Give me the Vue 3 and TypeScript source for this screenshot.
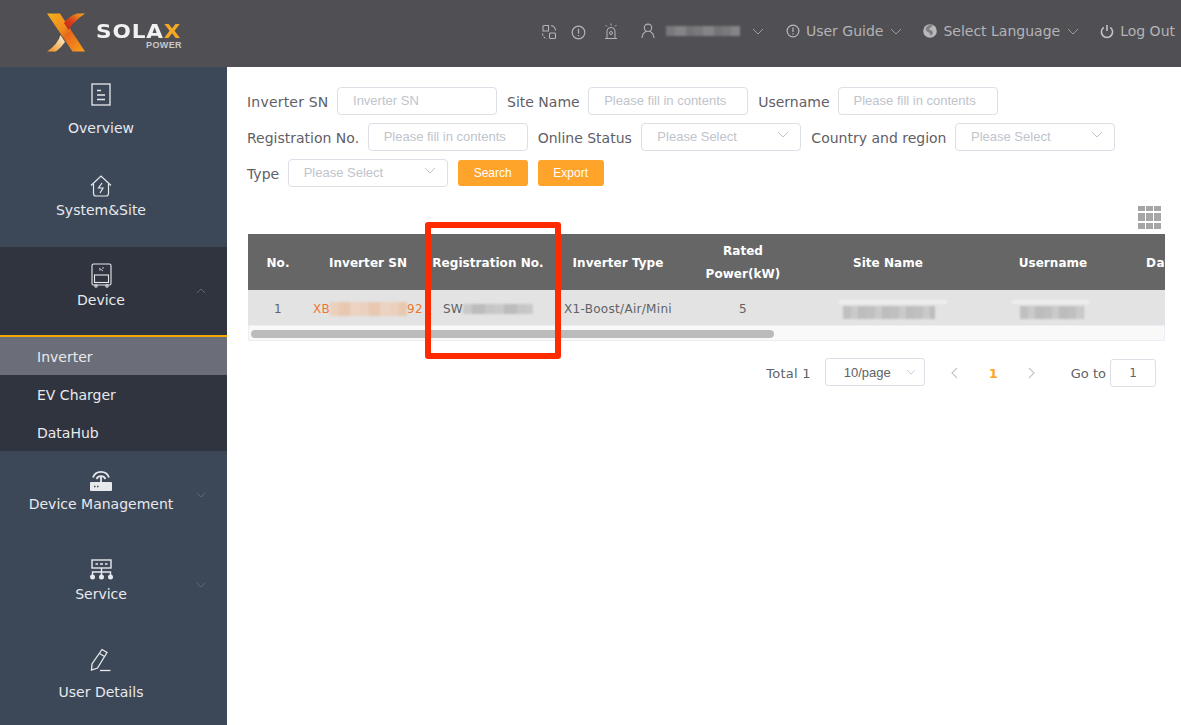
<script setup lang="ts">
const cols = [
  { w: 60, label: 'No.' },
  { w: 120, label: 'Inverter SN' },
  { w: 120, label: 'Registration No.' },
  { w: 140, label: 'Inverter Type' },
  { w: 110, label: 'Rated\nPower(kW)' },
  { w: 180, label: 'Site Name' },
  { w: 150, label: 'Username' },
  { w: 120, label: 'Date', left: true },
]
const subs = ['Inverter', 'EV Charger', 'DataHub']
</script>

<template>
  <div class="page">
    <header class="top">
      <div class="logo">
        <svg class="logo-x" viewBox="0 0 38 39" width="38" height="39">
          <defs>
            <linearGradient id="xa" x1="0" y1="0" x2="1" y2="1">
              <stop offset="0" stop-color="#f5b01c" />
              <stop offset="0.42" stop-color="#f08a1d" />
              <stop offset="0.55" stop-color="#e8681b" />
              <stop offset="1" stop-color="#f9a01b" />
            </linearGradient>
            <linearGradient id="xb" x1="1" y1="0" x2="0" y2="1">
              <stop offset="0" stop-color="#f9ae1a" />
              <stop offset="0.55" stop-color="#d8401c" />
              <stop offset="1" stop-color="#b8241c" />
            </linearGradient>
            <linearGradient id="xc" x1="1" y1="0" x2="0" y2="1">
              <stop offset="0" stop-color="#fff6e8" />
              <stop offset="0.5" stop-color="#f6c077" />
              <stop offset="1" stop-color="#ef8f19" />
            </linearGradient>
          </defs>
          <path d="M0 0.500 H13 L38 38.500 H25.500 Z" fill="url(#xa)" />
          <path d="M38 0.500 H30 Q22 3 17 10 L21.500 17 Q26 9 38 0.500 Z" fill="url(#xb)" />
          <path d="M0 38.500 H9 Q14 35 18 29 L13.500 22 Q11 31 0 38.500 Z" fill="url(#xc)" />
        </svg>
        <div class="brand">
          <div class="solax">SOLA<span>X</span></div>
          <div class="power">POWER</div>
        </div>
      </div>
      <nav class="tools">
        <span class="tool icons">
          <svg width="16" height="16" viewBox="0 0 16 16" fill="none" stroke="#b4b4b6" stroke-width="1.100">
            <path d="M2 7V2.500Q2 1.500 3 1.500H7.500V7Z" /><rect x="8.500" y="9" width="6" height="5.500" rx="1" />
            <path d="M10 1.500Q14 2 14.500 6.500" /><path d="M1.500 9.500Q2 14 6 14.500" stroke-dasharray="2 1.400" />
          </svg>
        </span>
        <span class="tool alert">
          <svg width="15" height="15" viewBox="0 0 15 15" fill="none" stroke="#b4b4b6" stroke-width="1.200">
            <circle cx="7.500" cy="7.500" r="6.300" /><path d="M7.500 3.800V8.600M7.500 10V11.200" />
          </svg>
        </span>
        <span class="tool bell">
          <svg width="16" height="17" viewBox="0 0 16 17" fill="none" stroke="#b4b4b6" stroke-width="1">
            <path d="M4 15V8Q4 4.500 8 4.500T12 8V15" /><path d="M2 15.500H14" /><circle cx="8" cy="10" r="1.500" />
            <path d="M8 .5V2.500M2.500 2L4 3.500M13.500 2L12 3.500" />
          </svg>
        </span>
        <span class="tool user">
          <svg width="14" height="16" viewBox="0 0 14 16" fill="none" stroke="#b4b4b6" stroke-width="1.100">
            <circle cx="7" cy="4.800" r="3.700" /><path d="M1 15Q1.500 10 5 8.600M13 15Q12.500 10 9 8.600" />
          </svg>
          <i class="blur-name"></i>
          <svg class="chev" width="12" height="7" viewBox="0 0 12 7" fill="none" stroke="#9d9da0" stroke-width="1"><path d="M1 1L6 6L11 1" /></svg>
        </span>
        <span class="tool guide">
          <svg width="14" height="14" viewBox="0 0 15 15" fill="none" stroke="#b9b9bb" stroke-width="1.300">
            <circle cx="7.500" cy="7.500" r="6.300" /><path d="M7.500 3.800V8.600M7.500 10V11.200" />
          </svg>
          User Guide
          <svg class="chev" width="12" height="7" viewBox="0 0 12 7" fill="none" stroke="#9d9da0" stroke-width="1"><path d="M1 1L6 6L11 1" /></svg>
        </span>
        <span class="tool lang">
          <svg width="14" height="14" viewBox="0 0 14 14">
            <circle cx="7" cy="7" r="6.800" fill="#b9b9bb" />
            <path d="M7 .8L9.500 1L8.500 3L6 4.500L7 6L9 6.500L10 9L8 12L6.500 9L4 7.500L2.500 5L4 2.500Z" fill="#504f54" opacity=".55" />
          </svg>
          Select Language
          <svg class="chev" width="12" height="7" viewBox="0 0 12 7" fill="none" stroke="#9d9da0" stroke-width="1"><path d="M1 1L6 6L11 1" /></svg>
        </span>
        <span class="tool logout">
          <svg width="14" height="15" viewBox="0 0 14 15" fill="none" stroke="#c2c2c4" stroke-width="1.600">
            <path d="M7 1V7" /><path d="M3.800 3.300A5.600 5.600 0 1 0 10.200 3.300" />
          </svg>
          Log Out
        </span>
      </nav>
    </header>

    <div class="body">
      <aside class="side">
        <div class="item wide">
          <svg width="20" height="24" viewBox="0 0 20 24" fill="none" stroke="#e8e9ec" stroke-width="1.300">
            <rect x="1" y="1" width="18" height="21" /><path d="M6 7.500H10M6 12H14M6 16.500H14" />
          </svg>
          <span>Overview</span>
        </div>
        <div class="item">
          <svg width="22" height="22" viewBox="0 0 22 22" fill="none" stroke="#e8e9ec" stroke-width="1.200">
            <path d="M1 10.500L11 1L21 10.500" /><path d="M3.500 9V18.500Q3.500 21 6 21H16Q18.500 21 18.500 18.500V9" />
            <path d="M12 8L8.500 13H13L10 18" />
          </svg>
          <span>System&amp;Site</span>
        </div>
        <div class="group">
          <div class="item dev">
            <svg width="21" height="25" viewBox="0 0 21 25" fill="none" stroke="#e8e9ec" stroke-width="1.100">
              <rect x="1" y="1" width="19" height="21" rx="1.500" />
              <rect x="3.500" y="12" width="14" height="7.500" />
              <path d="M8 5L12 8M8 7H9.500M11 5H13" stroke-width=".8" />
              <circle cx="5" cy="23" r="1.200" /><circle cx="16" cy="23" r="1.200" />
            </svg>
            <span>Device</span>
            <svg class="arrow" width="10" height="6" viewBox="0 0 12 7" fill="none" stroke="#6d7078" stroke-width="1"><path d="M1 6L6 1L11 6" /></svg>
          </div>
          <div class="subs">
            <div v-for="(s, i) in subs" :key="s" class="sub" :class="{ on: i === 0 }">{{ s }}</div>
          </div>
        </div>
        <div class="item">
          <svg width="22" height="22" viewBox="0 0 22 22" fill="none" stroke="#e8e9ec" stroke-width="1.800">
            <path d="M3 8.500A8.500 8.500 0 0 1 19 8.500M6.500 10A5 5 0 0 1 15.500 10" />
            <path d="M11 8V14" />
            <rect x="0" y="13" width="22" height="9" rx="1" fill="#e8e9ec" stroke="none" />
            <path d="M4 17.500H5.500M7 17.500H8.500" stroke="#3c4858" stroke-width="1.500" />
          </svg>
          <span>Device Management</span>
          <svg class="arrow" width="10" height="6" viewBox="0 0 12 7" fill="none" stroke="#687080" stroke-width="1"><path d="M1 1L6 6L11 1" /></svg>
        </div>
        <div class="item svc">
          <svg width="23" height="21" viewBox="0 0 23 21" fill="none" stroke="#e8e9ec" stroke-width="1.400">
            <rect x="2" y="1" width="19" height="8" />
            <path d="M5.500 5H8M10 5H13M15 5H17.500" />
            <path d="M11.500 9V17M2.500 17V13H20.500V17" />
            <circle cx="2.500" cy="18" r="1.800" fill="#e8e9ec" /><circle cx="11.500" cy="18" r="1.800" fill="#e8e9ec" /><circle cx="20.500" cy="18" r="1.800" fill="#e8e9ec" />
          </svg>
          <span>Service</span>
          <svg class="arrow" width="10" height="6" viewBox="0 0 12 7" fill="none" stroke="#687080" stroke-width="1"><path d="M1 1L6 6L11 1" /></svg>
        </div>
        <div class="item wide last">
          <svg width="22" height="24" viewBox="0 0 22 24" fill="none" stroke="#e8e9ec" stroke-width="1.300">
            <path d="M12 1.500L17 4.500L7.500 20L1.500 22L2 16Z" /><path d="M9.500 5.500L14.500 8.500" />
            <path d="M10 22.500H20.500" />
          </svg>
          <span>User Details</span>
        </div>
      </aside>

      <main class="main">
        <div class="form">
          <div class="row">
            <label class="first">Inverter SN</label><div class="field">Inverter SN</div>
            <label>Site Name</label><div class="field">Please fill in contents</div>
            <label class="tight">Username</label><div class="field">Please fill in contents</div>
          </div>
          <div class="row">
            <label>Registration No.</label><div class="field">Please fill in contents</div>
            <label class="loose">Online Status</label>
            <div class="field select">Please Select<svg width="12" height="7" viewBox="0 0 12 7" fill="none" stroke="#c0c4cc" stroke-width="1"><path d="M1 1L6 6L11 1" /></svg></div>
            <label>Country and region</label>
            <div class="field select">Please Select<svg width="12" height="7" viewBox="0 0 12 7" fill="none" stroke="#c0c4cc" stroke-width="1"><path d="M1 1L6 6L11 1" /></svg></div>
          </div>
          <div class="row">
            <label>Type</label>
            <div class="field select">Please Select<svg width="12" height="7" viewBox="0 0 12 7" fill="none" stroke="#c0c4cc" stroke-width="1"><path d="M1 1L6 6L11 1" /></svg></div>
            <button class="btn">Search</button>
            <button class="btn export">Export</button>
          </div>
        </div>

        <div class="grid-tool">
          <svg width="23" height="23" viewBox="0 0 23 23" fill="#a6a6a6">
            <rect x="0" y="0" width="7" height="5" /><rect x="8" y="0" width="7" height="5" /><rect x="16" y="0" width="7" height="5" />
            <rect x="0" y="7" width="7" height="8" /><rect x="8" y="7" width="7" height="8" /><rect x="16" y="7" width="7" height="8" />
            <rect x="0" y="17" width="7" height="6" /><rect x="8" y="17" width="7" height="6" /><rect x="16" y="17" width="7" height="6" />
          </svg>
        </div>

        <div class="table">
          <div class="thead">
            <div v-for="c in cols" :key="c.label" class="th" :class="{ left: c.left }" :style="{ width: c.w + 'px' }">{{ c.label }}</div>
          </div>
          <div class="tbody">
            <div class="td" style="width: 60px">1</div>
            <div class="td link" style="width: 120px">XB<i class="smear orange"></i>92</div>
            <div class="td" style="width: 120px">SW<i class="smear gray"></i></div>
            <div class="td" style="width: 140px">X1-Boost/Air/Mini</div>
            <div class="td" style="width: 110px">5</div>
            <div class="td" style="width: 180px"><i class="smear block site"></i></div>
            <div class="td" style="width: 150px"><i class="smear block usr"></i></div>
            <div class="td" style="width: 120px"></div>
          </div>
          <div class="bar"><div class="thumb"></div></div>
        </div>

        <div class="pager">
          <span class="total">Total 1</span>
          <div class="size">10/page<svg width="10" height="6" viewBox="0 0 12 7" fill="none" stroke="#c0c4cc" stroke-width="1"><path d="M1 1L6 6L11 1" /></svg></div>
          <svg class="pg-arrow first" width="7" height="12" viewBox="0 0 7 12" fill="none" stroke="#c0c4cc" stroke-width="1.100"><path d="M6 1L1 6L6 11" /></svg>
          <span class="cur">1</span>
          <svg class="pg-arrow" width="7" height="12" viewBox="0 0 7 12" fill="none" stroke="#c0c4cc" stroke-width="1.100"><path d="M1 1L6 6L1 11" /></svg>
          <span class="goto">Go to</span>
          <div class="jump">1</div>
        </div>

        <div class="redbox" aria-hidden="true"></div>
      </main>
    </div>
  </div>
</template>

<style>
html, body { margin: 0; background: #fff; }
</style>

<style scoped>
.page {
  width: 1181px;
  height: 725px;
  overflow: hidden;
  display: flex;
  flex-direction: column;
  font-family: "DejaVu Sans", sans-serif;
}
.top {
  height: 67px;
  flex: none;
  background: #504f54;
  display: flex;
  align-items: center;
  justify-content: space-between;
}
.logo { display: flex; align-items: center; margin-left: 47px; gap: 11px; }
.logo-x { display: block; margin-top: -2px; }
.brand { display: flex; flex-direction: column; align-items: flex-end; width: 86px; margin-top: 5px; }
.solax {
  width: 86px;
  font: 700 20px/18px "DejaVu Sans", sans-serif;
  letter-spacing: .8px;
  color: #f1f1f1;
  white-space: nowrap;
  transform: scaleX(1.08);
  transform-origin: left center;
}
.solax span { color: #f7a823; }
.power {
  font: 700 9px/10px "Liberation Sans", sans-serif;
  color: #c9c9ca;
  letter-spacing: .4px;
}
.tools {
  display: flex;
  align-items: center;
  color: #b4b4b6;
  font-size: 14px;
  height: 62px;
  padding-right: 6px;
  margin-top: -5px;
}
.tool { display: flex; align-items: center; white-space: nowrap; }
.icons { margin-right: 14px; margin-top: 2px; }
.alert { margin-right: 17px; margin-top: 3px; }
.bell { margin-right: 22px; margin-top: 1px; }
.user { margin-right: 22px; }
.blur-name {
  display: block;
  width: 74px;
  height: 10px;
  margin: 0 12px 0 11px;
  background: repeating-linear-gradient(90deg, #7a7a7d 0 9px, #858588 9px 20px, #747477 20px 28px);
  filter: blur(1px);
}
.guide { gap: 6px; margin-right: 21px; }
.guide .chev, .lang .chev { margin-left: 1px; }
.lang { gap: 6px; margin-right: 21px; }
.logout { gap: 6px; }

.body { flex: 1; display: flex; min-height: 0; }
.side {
  width: 227px;
  flex: none;
  background: #3c4858;
  color: #e8e9ec;
  font-size: 14px;
  line-height: 17px;
  display: flex;
  flex-direction: column;
}
.item {
  position: relative;
  height: 90px;
  box-sizing: border-box;
  display: flex;
  flex-direction: column;
  align-items: center;
  padding: 18px 25px 0 0;
  gap: 5px;
  flex: none;
}
.item.wide { padding-top: 16px; gap: 13px; }
.item.dev { padding-top: 16px; gap: 4px; }
.item.svc { gap: 6px; }
.item.last { height: 94px; padding-top: 17px; gap: 12px; }
.arrow { position: absolute; right: 21px; top: 41px; }
.group { background: #30343f; }
.group > .item { border-bottom: 2px solid #f5a800; }
.subs { display: flex; flex-direction: column; }
.sub { height: 38px; line-height: 40px; padding-left: 37px; }
.sub.on { background: #6b6e78; }

.main { position: relative; flex: 1; min-width: 0; padding: 20px 16px 0 20px; }
.form { display: flex; flex-direction: column; gap: 8px; }
.row { display: flex; align-items: center; height: 28px; font-size: 14px; color: #5f6066; }
.row label { margin-right: 8.500px; padding-top: 2px; white-space: nowrap; }
.row label.first { letter-spacing: .2px; }
.row label.tight { margin-right: 8px; }
.row label.loose { margin-right: 9.500px; }
.field {
  width: 160px;
  height: 28px;
  box-sizing: border-box;
  border: 1px solid #dcdfe6;
  border-radius: 4px;
  padding: 0 15px;
  margin-right: 10px;
  font: 13px/24px "Liberation Sans", sans-serif;
  color: #c0c4cc;
  display: flex;
  align-items: center;
  justify-content: space-between;
  white-space: nowrap;
}
.select svg { margin-right: -4px; margin-top: -5px; }
.btn {
  width: 70px;
  height: 26px;
  border: 0;
  border-radius: 3px;
  padding: 0;
  margin-right: 10px;
  background: #ffa42a;
  color: #fff;
  font: 12px "Liberation Sans", sans-serif;
}
.btn.export { width: 66px; }
.grid-tool { display: flex; justify-content: flex-end; height: 23px; margin-top: 19px; padding-right: 4px; }
.table {
  margin-top: 5px;
  margin-left: 1px;
  width: 917px;
  box-sizing: border-box;
  overflow: hidden;
  box-shadow: inset 0 0 0 1px #ebeef5;
  background: #f9f9f9;
  height: 107px;
}
.thead { display: flex; height: 56px; background: #666; }
.th {
  flex: none;
  box-sizing: border-box;
  display: flex;
  align-items: center;
  justify-content: center;
  text-align: center;
  padding-top: 2px;
  color: #fff;
  font-weight: 700;
  font-size: 12px;
  letter-spacing: .05px;
  line-height: 23px;
  white-space: pre-line;
}
.th.left { justify-content: flex-start; padding-left: 18px; letter-spacing: .5px; }
.tbody { display: flex; height: 36px; background: #e3e3e3; border-bottom: 1px solid #ebeef5; box-sizing: border-box; }
.td {
  flex: none;
  box-sizing: border-box;
  display: flex;
  align-items: center;
  justify-content: center;
  padding-top: 2px;
  color: #606266;
  font-size: 12px;
  letter-spacing: .3px;
  white-space: nowrap;
}
.link { color: #f0782e; }
.smear { display: block; position: relative; }
.orange { width: 77px; height: 14px; background: repeating-linear-gradient(90deg, #ebd0bd 0 9px, #e8c8b1 9px 20px, #ecd3c2 20px 30px); filter: blur(1px); }
.gray { width: 70px; height: 10px; background: repeating-linear-gradient(90deg, #c9c9c9 0 9px, #bcbcbc 9px 22px, #c6c6c6 22px 32px); filter: blur(1px); }
.block { background: repeating-linear-gradient(90deg, #c0c0c0 0 8px, #cacaca 8px 15px, #bdbdbd 15px 24px); filter: blur(.8px); height: 13px; margin-top: 8px; }
.block::before {
  content: "";
  position: absolute;
  top: -6px;
  left: -4px;
  right: -12px;
  height: 4px;
  background: #eeeeee;
}
.site { width: 92px; margin-left: 2px; }
.usr { width: 64px; margin-left: -2px; }
.usr::before { left: -8px; right: -5px; }
.bar { height: 15px; padding: 4px 3px; box-sizing: border-box; }
.thumb { width: 523px; height: 8px; border-radius: 4px; background: #bbb; }
.pager {
  display: flex;
  align-items: center;
  justify-content: flex-end;
  height: 28px;
  margin-top: 18px;
  padding-right: 9px;
  width: 918px;
  box-sizing: border-box;
  font-size: 13px;
  color: #606266;
}
.total { margin-right: 14px; letter-spacing: .25px; }
.size {
  width: 100px;
  height: 28px;
  box-sizing: border-box;
  border: 1px solid #dcdfe6;
  border-radius: 3px;
  display: flex;
  align-items: center;
  justify-content: space-between;
  padding: 0 8px 0 18px;
  font: 13px "Liberation Sans", sans-serif;
  margin-right: 26px;
  align-self: flex-start;
  margin-top: -1px;
}
.pg-arrow.first { margin-right: 31px; }
.cur { font-weight: 700; color: #ffa42a; margin-right: 30px; }
.goto { margin-left: 36px; margin-right: 4px; }
.jump {
  width: 46px;
  height: 28px;
  box-sizing: border-box;
  border: 1px solid #dcdfe6;
  border-radius: 3px;
  display: flex;
  align-items: center;
  justify-content: center;
  font-size: 12px;
}
.redbox {
  position: absolute;
  left: 198px;
  top: 155px;
  width: 136px;
  height: 137px;
  box-sizing: border-box;
  border: 6px solid #ff2a00;
  border-radius: 3px;
}
</style>
